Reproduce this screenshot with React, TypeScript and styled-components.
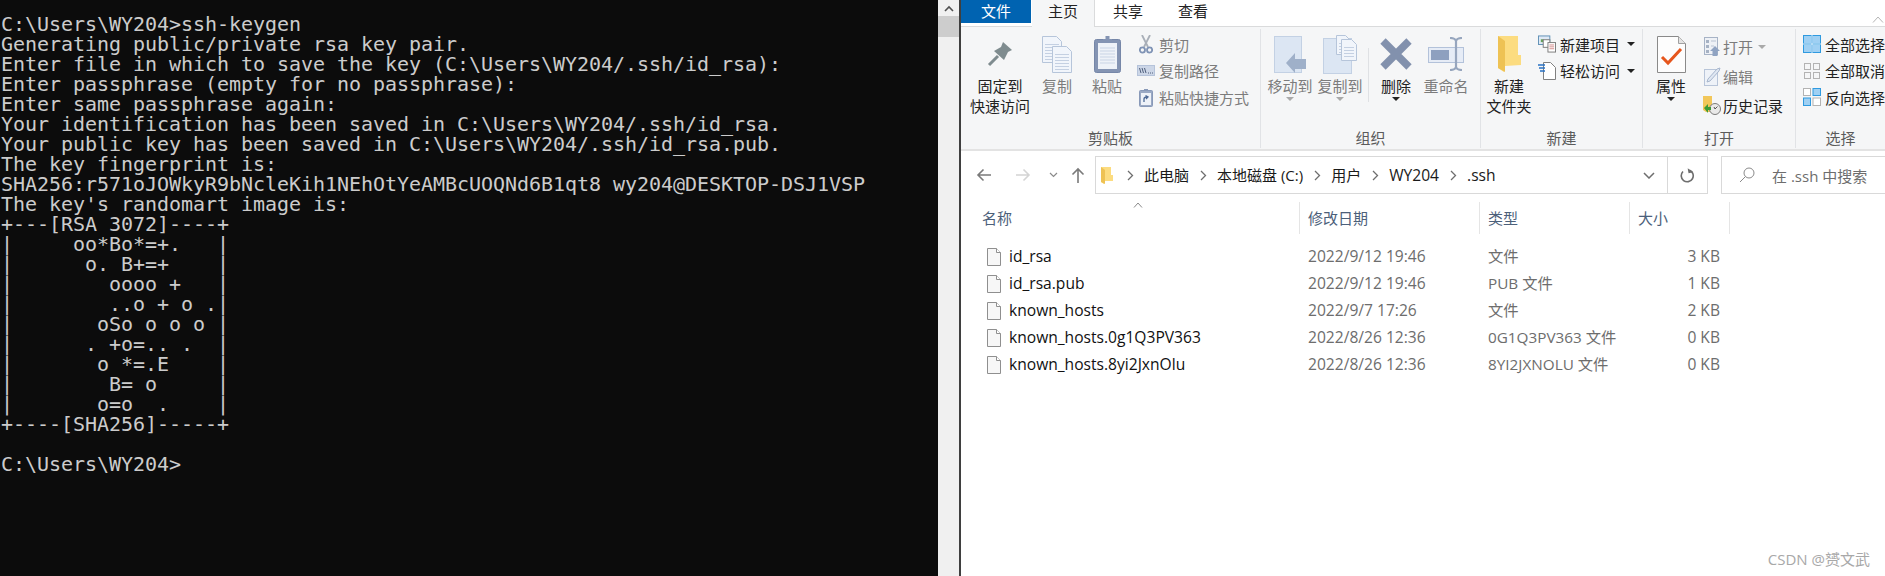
import React, { ReactNode } from 'react';
import styled, { createGlobalStyle } from 'styled-components';

const UI_FONT = `"Open Sans", "Noto Sans CJK SC", sans-serif`;

const GlobalStyle = createGlobalStyle`
  html, body {
    margin: 0;
    padding: 0;
    background: #fff;
  }
`;

const Page = styled.div`
  display: flex;
  width: 1885px;
  height: 576px;
  overflow: hidden;
  font-family: ${UI_FONT};
  position: relative;
`;

/* ---------- terminal ---------- */

const Terminal = styled.pre`
  width: 938px;
  height: 576px;
  margin: 0;
  padding: 14px 0 0 1px;
  box-sizing: border-box;
  background: #0c0c0c;
  color: #cccccc;
  font-family: "DejaVu Sans Mono", monospace;
  font-size: 20px;
  letter-spacing: -0.04px;
  line-height: 20px;
  white-space: pre;
  overflow: hidden;
`;

const Scrollbar = styled.div`
  width: 21px;
  height: 576px;
  background: #f0f0f0;
  border-right: 2px solid #3f3f3f;
  box-sizing: content-box;
  display: flex;
  flex-direction: column;
  align-items: stretch;
  flex: none;
`;

const ScrollArrow = styled.div`
  height: 16px;
  display: flex;
  align-items: center;
  justify-content: center;
`;

const ScrollThumb = styled.div`
  height: 21px;
  background: #cdcdcd;
`;

const TERMINAL_TEXT = String.raw`C:\Users\WY204>ssh-keygen
Generating public/private rsa key pair.
Enter file in which to save the key (C:\Users\WY204/.ssh/id_rsa):
Enter passphrase (empty for no passphrase):
Enter same passphrase again:
Your identification has been saved in C:\Users\WY204/.ssh/id_rsa.
Your public key has been saved in C:\Users\WY204/.ssh/id_rsa.pub.
The key fingerprint is:
SHA256:r571oJOWkyR9bNcleKih1NEhOtYeAMBcUOQNd6B1qt8 wy204@DESKTOP-DSJ1VSP
The key's randomart image is:
+---[RSA 3072]----+
|     oo*Bo*=+.   |
|      o. B+=+    |
|        oooo +   |
|        ..o + o .|
|       oSo o o o |
|      . +o=.. .  |
|       o *=.E    |
|        B= o     |
|       o=o  .    |
+----[SHA256]-----+

C:\Users\WY204>`;

/* ---------- explorer shell ---------- */

const Explorer = styled.div`
  flex: 1;
  min-width: 0;
  background: #fff;
  display: flex;
  flex-direction: column;
`;

const TabBar = styled.div`
  height: 26px;
  display: flex;
  align-items: flex-start;
  position: relative;
  border-bottom: 1px solid #dadbdc;
  box-sizing: content-box;
`;

const Tab = styled.div<{ $w: number; $kind?: 'file' | 'active' }>`
  width: ${(p) => p.$w}px;
  height: ${(p) => (p.$kind === 'file' ? 23 : p.$kind === 'active' ? 27 : 23)}px;
  display: flex;
  align-items: center;
  justify-content: center;
  font-size: 15px;
  padding-bottom: ${(p) => (p.$kind === 'active' ? 7 : 3)}px;
  box-sizing: border-box;
  color: ${(p) => (p.$kind === 'file' ? '#fff' : '#222')};
  background: ${(p) => (p.$kind === 'file' ? '#0063b1' : p.$kind === 'active' ? '#f5f6f7' : 'transparent')};
  border-right: ${(p) => (p.$kind === 'active' ? '1px solid #dadbdc' : 'none')};
  margin-right: ${(p) => (p.$kind === 'file' ? 1 : 0)}px;
  position: relative;
  z-index: 1;
`;

const Collapse = styled.div`
  margin-left: auto;
  margin-right: 1px;
  padding-top: 6px;
`;

const Ribbon = styled.div`
  height: 122px;
  display: flex;
  background: #f5f6f7;
  border-bottom: 2px solid #e3e3e3;
`;

const Group = styled.div<{ $w: number; $last?: boolean }>`
  width: ${(p) => p.$w}px;
  height: 119px;
  margin-top: 2px;
  flex: none;
  box-sizing: border-box;
  display: flex;
  flex-direction: column;
  border-right: ${(p) => (p.$last ? 'none' : '1px solid #e1e3e6')};
`;

const GroupBody = styled.div<{ $pad?: number }>`
  flex: 1;
  min-height: 0;
  display: flex;
  align-items: flex-start;
  padding-left: ${(p) => p.$pad ?? 0}px;
`;

const GroupLabel = styled.div`
  height: 20px;
  line-height: 20px;
  text-align: center;
  font-size: 15px;
  color: #5b5b5b;
`;

const BigButton = styled.div<{ $w: number; $off?: boolean }>`
  width: ${(p) => p.$w}px;
  flex: none;
  padding-top: 3px;
  display: flex;
  flex-direction: column;
  align-items: center;
  text-align: center;
  font-size: 15px;
  line-height: 20px;
  color: ${(p) => (p.$off ? '#7c7c7c' : '#222')};
  white-space: nowrap;
`;

const BigIcon = styled.div`
  height: 44px;
  display: flex;
  align-items: center;
  justify-content: center;
`;

const Caret = styled.span<{ $off?: boolean }>`
  display: inline-block;
  width: 0;
  height: 0;
  border-left: 4px solid transparent;
  border-right: 4px solid transparent;
  border-top: 4px solid ${(p) => (p.$off ? '#a9a9a9' : '#222')};
`;

const BigCaret = styled(Caret)`
  margin-top: 1px;
`;

const GroupDivider = styled.div`
  width: 1px;
  height: 54px;
  margin: 19px 2px 0 3px;
  background: #dfe1e4;
  flex: none;
`;

const SmallColumn = styled.div<{ $row: number; $top: number; $left?: number }>`
  display: flex;
  flex-direction: column;
  padding-top: ${(p) => p.$top}px;
  margin-left: ${(p) => p.$left ?? 0}px;
  > * {
    height: ${(p) => p.$row}px;
  }
`;

const SmallItem = styled.div<{ $off?: boolean; $gap?: number }>`
  display: flex;
  align-items: center;
  font-size: 15px;
  white-space: nowrap;
  gap: ${(p) => p.$gap ?? 4}px;
  color: ${(p) => (p.$off ? '#7c7c7c' : '#222')};
`;

const SmallIcon = styled.span`
  width: 18px;
  height: 20px;
  flex: none;
  display: flex;
  align-items: center;
  justify-content: center;
`;

const ItemCaret = styled(Caret)`
  margin-left: 3px;
`;

/* ---------- address row ---------- */

const AddressRow = styled.div`
  height: 51px;
  display: flex;
  align-items: flex-start;
  padding-top: 5px;
  box-sizing: border-box;
`;

const NavButtons = styled.div`
  width: 134px;
  height: 38px;
  flex: none;
  display: flex;
  align-items: center;
`;

const NavSlot = styled.span<{ $w: number }>`
  width: ${(p) => p.$w}px;
  display: flex;
  justify-content: center;
  flex: none;
`;

const AddressBox = styled.div`
  width: 613px;
  height: 38px;
  flex: none;
  display: flex;
  align-items: center;
  box-sizing: border-box;
  border: 1px solid #d9d9d9;
  font-size: 15px;
  color: #1a1a1a;
  padding-left: 5px;
`;

const Crumbs = styled.div`
  flex: 1;
  display: flex;
  align-items: center;
  white-space: nowrap;
  line-height: 20px;
`;

const Crumb = styled.span<{ $latin: boolean }>`
  font-size: ${(p) => (p.$latin ? 15.6 : 15)}px;
`;

const CrumbArrow = styled.span<{ $first?: boolean }>`
  width: 28px;
  display: flex;
  justify-content: center;
  margin-left: ${(p) => (p.$first ? 3 : 0)}px;
`;

const AddressTail = styled.div`
  width: 39px;
  height: 36px;
  display: flex;
  align-items: center;
  justify-content: center;
  border-left: 1px solid #d9d9d9;
`;

const AddressDrop = styled.span`
  width: 36px;
  display: flex;
  justify-content: center;
`;

const SearchBox = styled.div`
  margin-left: 13px;
  flex: 1;
  height: 38px;
  display: flex;
  align-items: center;
  box-sizing: border-box;
  border: 1px solid #d9d9d9;
  border-right: none;
  font-size: 15px;
  color: #6d6d6d;
  padding-left: 17px;
  gap: 17px;
  white-space: nowrap;
`;

/* ---------- file list ---------- */

const COLUMNS = '339px 180px 150px 100px';

const ListHeader = styled.div`
  display: grid;
  grid-template-columns: ${COLUMNS};
  height: 32px;
  position: relative;
`;

const HeadCell = styled.div<{ $first?: boolean }>`
  height: 32px;
  line-height: 32px;
  font-size: 15px;
  color: #4c607a;
  box-sizing: border-box;
  padding-left: ${(p) => (p.$first ? 21 : 8)}px;
  border-right: 1px solid #e5e5e5;
`;

const SortMark = styled.div`
  position: absolute;
  left: 172px;
  top: 0;
  line-height: 0;
`;

const FileList = styled.div`
  margin-top: 9px;
`;

const FileRow = styled.div`
  display: grid;
  grid-template-columns: ${COLUMNS};
  height: 27px;
  line-height: 27px;
  font-size: 15.6px;
  color: #6d6d6d;
  white-space: nowrap;
`;

const NameCell = styled.div`
  display: flex;
  align-items: center;
  gap: 8px;
  padding-left: 26px;
  color: #111;
`;

const DataCell = styled.div<{ $size?: number }>`
  padding-left: 8px;
  font-size: ${(p) => p.$size ?? 15.6}px;
`;

const SizeCell = styled.div`
  text-align: right;
  padding-right: 10px;
`;

const Watermark = styled.div`
  position: absolute;
  right: 15px;
  top: 549px;
  font-size: 15px;
  line-height: 20px;
  color: #a8a8a8;
  white-space: nowrap;
`;

/* ---------- icons ---------- */

const Doc: React.FC<{ x: number; y: number; w: number; h: number }> = ({ x, y, w, h }) => (
  <g>
    <path
      d={`M${x + 0.5} ${y + 0.5}h${w - 6}l5 5v${h - 6}h-${w - 1}z`}
      fill="#f1f5fb"
      stroke="#b6c5da"
    />
    {[8, 11, 14, 17, 20, 23].filter((l) => l < h - 2).map((l) => (
      <path key={l} d={`M${x + 3} ${y + l + 0.5}h${w - 6}`} stroke="#c4d0e2" />
    ))}
  </g>
);

const PinIcon = () => (
  <svg width="26" height="26" viewBox="0 0 26 26">
    <path d="M16 1 L25 9 L21 11 L17 19 L7 10 L14 6 Z" fill="#7f8c8f" />
    <path d="M11 15 L2 24" stroke="#7f8c8f" strokeWidth="3" />
  </svg>
);

const CopyIcon = () => (
  <svg width="31" height="37" viewBox="0 0 31 37">
    <Doc x={0} y={0} w={20} h={27} />
    <Doc x={10} y={10} w={20} h={27} />
  </svg>
);

const PasteIcon = () => (
  <svg width="27" height="37" viewBox="0 0 27 37">
    <rect x="0.5" y="3.5" width="26" height="33" rx="2" fill="#8494b3" stroke="#7687a8" />
    <rect x="4" y="7" width="19" height="26" fill="#eef2f8" />
    <path d="M6 12h15M6 15h15M6 18h15M6 21h15M6 24h15M6 27h15" stroke="#c9d4e5" />
    <path d="M9 6h9V3h-2.5V0h-4v3H9z" fill="#8494b3" />
  </svg>
);

const ScissorsIcon = () => (
  <svg width="14" height="19" viewBox="0 0 14 19" fill="none">
    <path d="M3 0 L9 12 M11 0 L5 12" stroke="#a9afb8" strokeWidth="1.8" />
    <circle cx="3.4" cy="15" r="2.6" stroke="#7f93b5" strokeWidth="1.8" />
    <circle cx="10.6" cy="15" r="2.6" stroke="#7f93b5" strokeWidth="1.8" />
  </svg>
);

const PathIcon = () => (
  <svg width="18" height="11" viewBox="0 0 18 11" fill="none">
    <rect x="0.5" y="0.5" width="17" height="10" fill="#ccd6e7" stroke="#b5c3da" />
    <path d="M2.5 3l1.5 5M5 3l1.5 5M7.5 3l1.5 5" stroke="#4f5f7c" />
    <path d="M11 8h1M13 8h1M15 8h1" stroke="#4f5f7c" />
  </svg>
);

const PasteLinkIcon = () => (
  <svg width="14" height="19" viewBox="0 0 14 19" fill="none">
    <rect x="0.5" y="2.5" width="13" height="16" rx="1" fill="#9aa9c4" stroke="#8899b8" />
    <rect x="2" y="5" width="10" height="12" fill="#eef2f8" />
    <path d="M5 1h4v2H5z" fill="#8899b8" />
    <path d="M5 14v-3c0-1 1-2 3-2M6.5 7.5L9 9l-2 2" stroke="#4e6a96" strokeWidth="1.3" />
  </svg>
);

const MoveToIcon = () => (
  <svg width="33" height="37" viewBox="0 0 33 37">
    <rect x="0.5" y="0.5" width="27" height="36" fill="#dce6f3" stroke="#c3d1e4" />
    <path d="M12 27 L21 17 V23 H32 V33 H21 V37 Z" fill="#9fb0c9" />
  </svg>
);

const CopyToIcon = () => (
  <svg width="34" height="39" viewBox="0 0 34 39">
    <rect x="0.5" y="3.5" width="28" height="35" fill="#dce6f3" stroke="#c3d1e4" />
    <Doc x={13} y={0} w={15} h={20} />
    <Doc x={18} y={4} w={16} h={22} />
  </svg>
);

const DeleteIcon = () => (
  <svg width="32" height="32" viewBox="0 0 32 32">
    <path d="M3 3 L29 29 M29 3 L3 29" stroke="#8291ad" strokeWidth="7.5" />
  </svg>
);

const RenameIcon = () => (
  <svg width="36" height="34" viewBox="0 0 36 34" fill="none">
    <rect x="0.5" y="10.5" width="35" height="15" fill="#e6ecf6" stroke="#b3c2da" />
    <rect x="3" y="13" width="18" height="10" fill="#8ea0bf" />
    <path d="M22 1 q5 0 6 3 q1 -3 6 -3 M28 4 V30 M22 33 q5 0 6 -3 q1 3 6 3" stroke="#97a6be" strokeWidth="2.2" />
  </svg>
);

const FolderIcon = () => (
  <svg width="24" height="36" viewBox="0 0 24 36">
    <path d="M1 0 H21 V19 H24 V29 L8 30 L7 36 L1 32 Z" fill="#fcdc80" />
    <path d="M1 0 L8 5 V36 L1 32 Z" fill="#eec254" />
  </svg>
);

const SmallFolder = () => (
  <svg width="12" height="17" viewBox="0 0 12 17">
    <path d="M0 0 H10 V8 H12 V14 L4 14 L3 17 L0 15 Z" fill="#fcdc80" />
    <path d="M0 0 L4 3 V17 L0 15 Z" fill="#eec254" />
  </svg>
);

const NewItemIcon = () => (
  <svg width="19" height="18" viewBox="0 0 19 18" fill="none">
    <rect x="0.5" y="0.5" width="12" height="9" fill="#dfe9f5" stroke="#5d8fb5" />
    <rect x="3" y="4" width="3" height="3" fill="#66a35a" />
    <rect x="5.5" y="4.5" width="7" height="8" fill="#fff" stroke="#7a7a7a" />
    <rect x="10.5" y="7.5" width="8" height="10" fill="#fff" stroke="#7a7a7a" />
    <path d="M12 10h5M12 12h5M12 14h5" stroke="#d38a8a" />
  </svg>
);

const EasyAccessIcon = () => (
  <svg width="18" height="19" viewBox="0 0 18 19" fill="none">
    <path d="M5.5 1.5h7l5 5v12h-12z" fill="#fff" stroke="#808080" />
    <path d="M0 4h7M1 7h6M2 10h5" stroke="#2a73c5" strokeWidth="1.4" />
  </svg>
);

const PropertiesIcon = () => (
  <svg width="29" height="37" viewBox="0 0 29 37" fill="none">
    <path d="M0.5 0.5h21l7 7v29h-28z" fill="#fdfdfd" stroke="#8a8a8a" />
    <path d="M21.5 0.5v7h7" fill="#e4e4e4" stroke="#a0a0a0" />
    <path d="M5 21 L11 27 L24 13" stroke="#e6561d" strokeWidth="3" />
  </svg>
);

const OpenIcon = () => (
  <svg width="16" height="19" viewBox="0 0 16 19" fill="none">
    <rect x="0.5" y="0.5" width="13" height="17" fill="#eef1f6" stroke="#a7b3c6" />
    <path d="M2 3h3v3H2zM2 8h3v3H2zM2 13h3v3H2z" fill="#a6b2c4" />
    <path d="M7 4h5M7 9h3" stroke="#b8c2d1" />
    <path d="M11 9 L16 14 H13.5 V19 H8.5 V14 H6 Z" fill="#8fa3c2" />
  </svg>
);

const EditIcon = () => (
  <svg width="17" height="19" viewBox="0 0 17 19" fill="none">
    <rect x="0.5" y="2.5" width="13" height="16" fill="#eef2f8" stroke="#b8c5d9" />
    <path d="M3 15 L4 12 L13 2 L16 1 L15 4 L6 14 Z" fill="#dfe7f2" stroke="#a7b6cd" />
  </svg>
);

const HistoryIcon = () => (
  <svg width="18" height="19" viewBox="0 0 18 19" fill="none">
    <path d="M0 0 H9 V16 H3 L0 14 Z" fill="#f2c75a" />
    <circle cx="12" cy="13" r="5.5" fill="#e9e9e9" stroke="#7b7b7b" />
    <path d="M12 13l2.5-2.5M12 13l-1-2" stroke="#555" />
    <path d="M1 12 L5 8 V11 H8 V14 H5 V17 Z" fill="#3e9b36" />
  </svg>
);

const SelectAllIcon = () => (
  <svg width="18" height="18" viewBox="0 0 18 18">
    <rect x="0.5" y="0.5" width="17" height="17" fill="#9fd0f3" stroke="#2f9ae0" />
    <path d="M9 0v18M0 9h18" stroke="#2f9ae0" strokeWidth="1.4" />
    <path d="M0 9h18" stroke="#fff" strokeWidth="0.8" />
    <path d="M9 0v18" stroke="#fff" strokeWidth="0.8" />
  </svg>
);

const SelectNoneIcon = () => (
  <svg width="16" height="16" viewBox="0 0 16 16" fill="none" stroke="#b3b3b3">
    <rect x="0.5" y="0.5" width="6" height="6" />
    <rect x="9.5" y="0.5" width="6" height="6" />
    <rect x="0.5" y="9.5" width="6" height="6" />
    <rect x="9.5" y="9.5" width="6" height="6" />
  </svg>
);

const InvertIcon = () => (
  <svg width="18" height="18" viewBox="0 0 18 18">
    <rect x="0.5" y="0.5" width="7" height="7" fill="#fff" stroke="#b3b3b3" />
    <rect x="10" y="0.5" width="7.5" height="7" fill="#9fd0f3" stroke="#2f9ae0" />
    <rect x="0.5" y="10" width="7" height="7.5" fill="#9fd0f3" stroke="#2f9ae0" />
    <rect x="10" y="10" width="7.5" height="7.5" fill="#fff" stroke="#b3b3b3" />
  </svg>
);

const FileIcon = () => (
  <svg width="14" height="18" viewBox="0 0 14 18" fill="none">
    <path d="M0.5 0.5h9l4 4v13h-13z" fill="#f7f7f7" stroke="#8f8f8f" />
    <path d="M9.5 0.5v4h4" stroke="#8f8f8f" fill="#fff" />
  </svg>
);

const ChevronRight = () => (
  <svg width="7" height="11" viewBox="0 0 7 11" fill="none">
    <path d="M1 1l4.5 4.5L1 10" stroke="#6e6e6e" strokeWidth="1.3" />
  </svg>
);

const Arrow: React.FC<{ dir: 'left' | 'right'; color: string }> = ({ dir, color }) => (
  <svg width="16" height="14" viewBox="0 0 16 14" fill="none">
    <path d={dir === 'left' ? 'M15 7H2M7.5 1.5L2 7l5.5 5.5' : 'M1 7h13M8.5 1.5L14 7l-5.5 5.5'} stroke={color} strokeWidth="1.6" />
  </svg>
);

/* ---------- data ---------- */

const FILES = [
  ['id_rsa', '2022/9/12 19:46', '文件', '3 KB'],
  ['id_rsa.pub', '2022/9/12 19:46', 'PUB 文件', '1 KB'],
  ['known_hosts', '2022/9/7 17:26', '文件', '2 KB'],
  ['known_hosts.0g1Q3PV363', '2022/8/26 12:36', '0G1Q3PV363 文件', '0 KB'],
  ['known_hosts.8yi2JxnOlu', '2022/8/26 12:36', '8YI2JXNOLU 文件', '0 KB'],
];

const CRUMBS = ['此电脑', '本地磁盘 (C:)', '用户', 'WY204', '.ssh'];

interface BigProps {
  icon: ReactNode;
  w?: number;
  off?: boolean;
  caret?: boolean;
  children: ReactNode;
}

const Big: React.FC<BigProps> = ({ icon, w = 50, off, caret, children }) => (
  <BigButton $w={w} $off={off}>
    <BigIcon>{icon}</BigIcon>
    <div>{children}</div>
    {caret && <BigCaret $off={off} />}
  </BigButton>
);

export default function App() {
  return (
    <Page>
      <GlobalStyle />
      <Terminal>{TERMINAL_TEXT}</Terminal>
      <Scrollbar>
        <ScrollArrow>
          <svg width="10" height="7" viewBox="0 0 10 7" fill="none">
            <path d="M1 6l4-4 4 4" stroke="#505050" strokeWidth="1.6" />
          </svg>
        </ScrollArrow>
        <ScrollThumb />
      </Scrollbar>

      <Explorer>
        <TabBar>
          <Tab $w={70} $kind="file">文件</Tab>
          <Tab $w={63} $kind="active">主页</Tab>
          <Tab $w={66}>共享</Tab>
          <Tab $w={64}>查看</Tab>
          <Collapse>
            <svg width="12" height="7" viewBox="0 0 12 7" fill="none">
              <path d="M1 6.5L6 1l5 5.5" stroke="#b5b5b5" />
            </svg>
          </Collapse>
        </TabBar>

        <Ribbon>
          <Group $w={300}>
            <GroupBody $pad={7}>
              <Big w={64} icon={<PinIcon />}>固定到<br />快速访问</Big>
              <Big off icon={<CopyIcon />}>复制</Big>
              <Big off icon={<PasteIcon />}>粘贴</Big>
              <SmallColumn $row={26.5} $top={2} $left={5}>
                <SmallItem $off><SmallIcon><ScissorsIcon /></SmallIcon>剪切</SmallItem>
                <SmallItem $off><SmallIcon><PathIcon /></SmallIcon>复制路径</SmallItem>
                <SmallItem $off><SmallIcon><PasteLinkIcon /></SmallIcon>粘贴快捷方式</SmallItem>
              </SmallColumn>
            </GroupBody>
            <GroupLabel>剪贴板</GroupLabel>
          </Group>

          <Group $w={220}>
            <GroupBody $pad={4}>
              <Big off caret icon={<MoveToIcon />}>移动到</Big>
              <Big off caret icon={<CopyToIcon />}>复制到</Big>
              <GroupDivider />
              <Big caret icon={<DeleteIcon />}>删除</Big>
              <Big off icon={<RenameIcon />}>重命名</Big>
            </GroupBody>
            <GroupLabel>组织</GroupLabel>
          </Group>

          <Group $w={162}>
            <GroupBody>
              <Big w={56} icon={<FolderIcon />}>新建<br />文件夹</Big>
              <SmallColumn $row={26.5} $top={2} $left={1}>
                <SmallItem><SmallIcon><NewItemIcon /></SmallIcon>新建项目<ItemCaret /></SmallItem>
                <SmallItem><SmallIcon><EasyAccessIcon /></SmallIcon>轻松访问<ItemCaret /></SmallItem>
              </SmallColumn>
            </GroupBody>
            <GroupLabel>新建</GroupLabel>
          </Group>

          <Group $w={153}>
            <GroupBody>
              <Big w={56} caret icon={<PropertiesIcon />}>属性</Big>
              <SmallColumn $row={29.5} $top={3} $left={4}>
                <SmallItem $off $gap={2}><SmallIcon><OpenIcon /></SmallIcon>打开<ItemCaret $off /></SmallItem>
                <SmallItem $off $gap={2}><SmallIcon><EditIcon /></SmallIcon>编辑</SmallItem>
                <SmallItem $gap={2}><SmallIcon><HistoryIcon /></SmallIcon>历史记录</SmallItem>
              </SmallColumn>
            </GroupBody>
            <GroupLabel>打开</GroupLabel>
          </Group>

          <Group $w={89} $last>
            <GroupBody $pad={7}>
              <SmallColumn $row={26.5} $top={2}>
                <SmallItem><SmallIcon><SelectAllIcon /></SmallIcon>全部选择</SmallItem>
                <SmallItem><SmallIcon><SelectNoneIcon /></SmallIcon>全部取消</SmallItem>
                <SmallItem><SmallIcon><InvertIcon /></SmallIcon>反向选择</SmallItem>
              </SmallColumn>
            </GroupBody>
            <GroupLabel>选择</GroupLabel>
          </Group>
        </Ribbon>

        <AddressRow>
          <NavButtons>
            <NavSlot $w={46}><Arrow dir="left" color="#7a7a7a" /></NavSlot>
            <NavSlot $w={32}><Arrow dir="right" color="#d4d4d4" /></NavSlot>
            <NavSlot $w={28}>
              <svg width="9" height="6" viewBox="0 0 9 6" fill="none">
                <path d="M1 1l3.5 3.5L8 1" stroke="#8a8a8a" strokeWidth="1.2" />
              </svg>
            </NavSlot>
            <NavSlot $w={22}>
              <svg width="14" height="16" viewBox="0 0 14 16" fill="none">
                <path d="M7 16V2M1.5 7.5L7 2l5.5 5.5" stroke="#7a7a7a" strokeWidth="1.6" />
              </svg>
            </NavSlot>
          </NavButtons>
          <AddressBox>
            <SmallFolder />
            <Crumbs>
              {CRUMBS.map((c, i) => (
                <React.Fragment key={c}>
                  <CrumbArrow $first={i === 0}><ChevronRight /></CrumbArrow>
                  <Crumb $latin={i > 2}>{c}</Crumb>
                </React.Fragment>
              ))}
            </Crumbs>
            <AddressDrop>
              <svg width="12" height="7" viewBox="0 0 12 7" fill="none">
                <path d="M1 1l5 5 5-5" stroke="#6e6e6e" strokeWidth="1.5" />
              </svg>
            </AddressDrop>
            <AddressTail>
              <svg width="15" height="15" viewBox="0 0 15 15" fill="none">
                <path d="M9.5 2.2A6 6 0 1 1 3 3.5" stroke="#6e6e6e" strokeWidth="1.6" />
                <path d="M8 0v5h5z" fill="#6e6e6e" transform="rotate(-10 9 2)" />
              </svg>
            </AddressTail>
          </AddressBox>
          <SearchBox>
            <svg width="16" height="16" viewBox="0 0 16 16" fill="none">
              <circle cx="10" cy="6" r="5" stroke="#8a8a8a" />
              <path d="M6.5 9.5L1 15" stroke="#8a8a8a" />
            </svg>
            在 .ssh 中搜索
          </SearchBox>
        </AddressRow>

        <ListHeader>
          <HeadCell $first>名称</HeadCell>
          <HeadCell>修改日期</HeadCell>
          <HeadCell>类型</HeadCell>
          <HeadCell>大小</HeadCell>
          <SortMark>
            <svg width="10" height="6" viewBox="0 0 10 6" fill="none">
              <path d="M1 5.5L5 1l4 4.5" stroke="#8a8a8a" />
            </svg>
          </SortMark>
        </ListHeader>

        <FileList>
          {FILES.map(([name, date, type, size]) => (
            <FileRow key={name}>
              <NameCell><FileIcon />{name}</NameCell>
              <DataCell>{date}</DataCell>
              <DataCell $size={15.3}>{type}</DataCell>
              <SizeCell>{size}</SizeCell>
            </FileRow>
          ))}
        </FileList>
      </Explorer>

      <Watermark>CSDN @赟文武</Watermark>
    </Page>
  );
}
